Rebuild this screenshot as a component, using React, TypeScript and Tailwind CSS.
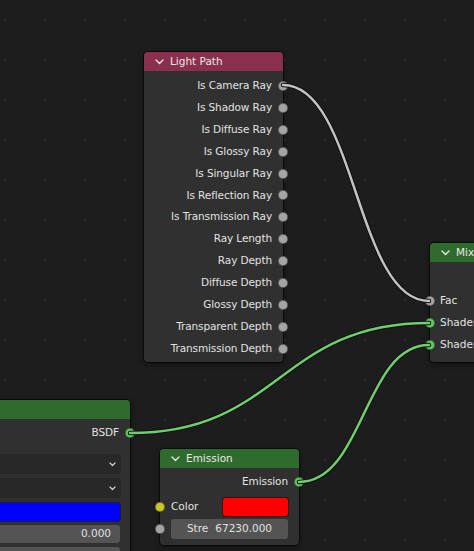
import React from 'react';

type SocketColor = 'grey' | 'green' | 'yellow';

const socketFill: Record<SocketColor, string> = {
  grey: 'bg-[#a5a5a5]',
  green: 'bg-[#63c763]',
  yellow: 'bg-[#c7c729]',
};

function Socket({ color, side }: { color: SocketColor; side: 'left' | 'right' }) {
  return (
    <span
      className={`absolute top-1/2 -translate-y-1/2 w-[10px] h-[10px] rounded-full border border-black/40 ${socketFill[color]} ${
        side === 'right' ? '-right-[5px]' : '-left-[5px]'
      }`}
    />
  );
}

function Chevron() {
  return (
    <svg width="9" height="6" viewBox="0 0 9 6" className="shrink-0">
      <polyline points="1,1 4.5,4.5 8,1" fill="none" stroke="#e6e6e6" strokeWidth="1.4" strokeLinecap="round" strokeLinejoin="round" />
    </svg>
  );
}

function SmallChevron() {
  return (
    <svg width="7" height="5" viewBox="0 0 7 5" className="shrink-0">
      <polyline points="1,1 3.5,3.5 6,1" fill="none" stroke="#d0d0d0" strokeWidth="1.2" strokeLinecap="round" strokeLinejoin="round" />
    </svg>
  );
}

function Header({ title, color }: { title: string; color: string }) {
  return (
    <div className={`h-[19px] rounded-t-[4px] flex items-center gap-[6px] pl-[11px] text-[#e8e8e8] ${color}`}>
      <Chevron />
      <span className="whitespace-nowrap">{title}</span>
    </div>
  );
}

function OutputRow({ label, color, tight }: { label: string; color: SocketColor; tight?: boolean }) {
  return (
    <div className={`relative flex items-center justify-end pr-[11px] ${tight ? 'h-[21.9px]' : 'h-[22px]'}`}>
      <span className="whitespace-nowrap tracking-[-0.1px]">{label}</span>
      <Socket color={color} side="right" />
    </div>
  );
}

function InputRow({ label, color }: { label: string; color: SocketColor }) {
  return (
    <div className="relative h-[22px] flex items-center pl-[10px]">
      <span className="whitespace-nowrap">{label}</span>
      <Socket color={color} side="left" />
    </div>
  );
}

const lightPathOutputs = [
  'Is Camera Ray',
  'Is Shadow Ray',
  'Is Diffuse Ray',
  'Is Glossy Ray',
  'Is Singular Ray',
  'Is Reflection Ray',
  'Is Transmission Ray',
  'Ray Length',
  'Ray Depth',
  'Diffuse Depth',
  'Glossy Depth',
  'Transparent Depth',
  'Transmission Depth',
];

const nodeCls =
  'absolute rounded-[4px] bg-[#303030] shadow-[0_0_0_1px_rgba(0,0,0,0.55),0_2px_6px_rgba(0,0,0,0.45)]';

function Links() {
  const link = (d: string, color: string) => (
    <g>
      <path d={d} fill="none" stroke="#111111" strokeWidth="4.5" strokeLinecap="round" />
      <path d={d} fill="none" stroke={color} strokeWidth="2.5" strokeLinecap="round" />
    </g>
  );
  return (
    <svg className="absolute inset-0 pointer-events-none" width="474" height="551">
      {link('M283,85 C356,85 356,301 429,301', '#c2c2c2')}
      {link('M130,433 C280,433 279,323 429,323', '#6fcf6f')}
      {link('M299,482 C364,482 364,345 429,345', '#6fcf6f')}
    </svg>
  );
}

function Grid() {
  return (
    <svg className="absolute inset-0" width="474" height="551">
      <defs>
        <pattern id="dots" x="5" y="20" width="40" height="40" patternUnits="userSpaceOnUse">
          <rect x="-1" y="-1" width="2" height="2" fill="#2b2b2b" />
          <rect x="39" y="-1" width="2" height="2" fill="#2b2b2b" />
          <rect x="-1" y="39" width="2" height="2" fill="#2b2b2b" />
          <rect x="39" y="39" width="2" height="2" fill="#2b2b2b" />
        </pattern>
      </defs>
      <rect width="474" height="551" fill="url(#dots)" />
    </svg>
  );
}

export default function App() {
  return (
    <div
      className="relative w-[474px] h-[551px] overflow-hidden bg-[#1d1d1d] text-[10.5px] text-[#e2e2e2]"
      style={{ fontFamily: '"DejaVu Sans", sans-serif' }}
    >
      <Grid />

      {/* Light Path */}
      <div className={`${nodeCls} left-[144px] top-[52px] w-[139px] h-[310px]`}>
        <Header title="Light Path" color="bg-[#8b2f4f]" />
        <div className="pt-[4px]">
          {lightPathOutputs.map((o) => (
            <OutputRow key={o} label={o} color="grey" tight />
          ))}
        </div>
      </div>

      {/* Mix Shader */}
      <div className={`${nodeCls} left-[430px] top-[243px] w-[110px] pb-[6px]`}>
        <Header title="Mix Shader" color="bg-[#2f6b2c]" />
        <div className="pt-[6px]">
          <div className="h-[22px]" />
          <InputRow label="Fac" color="grey" />
          <InputRow label="Shader" color="green" />
          <InputRow label="Shader" color="green" />
        </div>
      </div>

      {/* Principled BSDF (cut off on the left) */}
      <div className={`${nodeCls} -left-[200px] top-[400px] w-[330px] h-[200px]`}>
        <Header title="Principled BSDF" color="bg-[#2f6b2c]" />
        <div className="pt-[3px]">
          <OutputRow label="BSDF" color="green" />
        </div>
        <div className="flex flex-col pr-[10px] pl-[10px] mt-[11px]">
          <div className="h-[18px] rounded-[3px] bg-[#282828] shadow-[0_0_0_1px_#262626] flex items-center justify-end pr-[4px]">
            <SmallChevron />
          </div>
          <div className="h-[18px] mt-[6px] rounded-[3px] bg-[#282828] shadow-[0_0_0_1px_#262626] flex items-center justify-end pr-[4px]">
            <SmallChevron />
          </div>
          <div className="h-[18px] mt-[6px] rounded-[3px] bg-[#0000ff] shadow-[0_0_0_1px_#1a1a3a]" />
          <div className="h-[18px] mt-[4px] rounded-[3px] bg-[#545454] flex items-center justify-end pr-[9px] text-[#e0e0e0]">
            0.000
          </div>
          <div className="h-[18px] mt-[4px] rounded-[3px] bg-[#545454]" />
        </div>
      </div>

      {/* Emission */}
      <div className={`${nodeCls} left-[160px] top-[449px] w-[139px] pb-[5px]`}>
        <Header title="Emission" color="bg-[#2f6b2c]" />
        <div className="pt-[3px]">
          <OutputRow label="Emission" color="green" />
          <div className="relative h-[22px] mt-[3px] flex items-center justify-between pl-[11px] pr-[11px]">
            <span>Color</span>
            <span className="w-[65px] h-[18px] rounded-[3px] bg-[#ff0000] shadow-[0_0_0_1px_#3a1010]" />
            <Socket color="yellow" side="left" />
          </div>
          <div className="relative h-[22px] flex items-center px-[11px]">
            <div className="flex-1 h-[20px] rounded-[3px] bg-[#545454] flex items-center justify-center gap-[7px] text-[#e0e0e0]">
              <span>Stre</span>
              <span>67230.000</span>
            </div>
            <Socket color="grey" side="left" />
          </div>
        </div>
      </div>

      <Links />
    </div>
  );
}
